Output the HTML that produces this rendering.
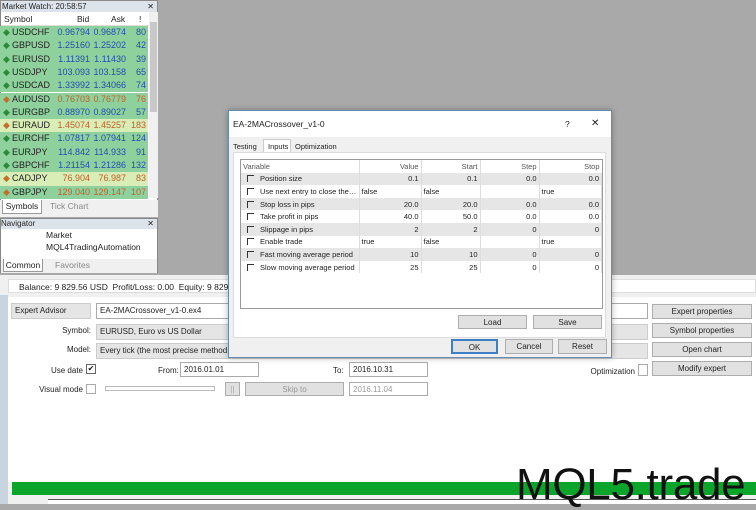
<!DOCTYPE html><html><head><style>
*{box-sizing:border-box;margin:0;padding:0}
body{width:756px;height:504px;overflow:hidden;background:#a9a9a9;font-family:"Liberation Sans",sans-serif;font-size:8px;color:#222;position:relative}
.a{position:absolute;white-space:nowrap}
.mw{left:0;top:0;width:158px;height:217px;background:#fff;border:1px solid #888}
.row{position:absolute;left:0;width:148px;height:13.3px;font-size:9px;line-height:13px}
.row span{position:absolute}
.g{background:#8fd19c}.y{background:#d9edb6}
.b{color:#1f4fb0}.o{color:#c0602a}
.btn{position:absolute;background:#e1e1e1;border:1px solid #adadad;text-align:center;font-size:8px;line-height:13px}
.inp{position:absolute;border:1px solid #aaa;background:#fff;font-size:8px;line-height:13px;padding-left:3px}
.cmb{position:absolute;background:#e5e5e5;border:1px solid #ccc;font-size:8px;line-height:14px;padding-left:3px}
.cb{display:inline-block;width:7px;height:7px;border-left:1px solid #333;border-top:1px solid #333;margin:0 6px 0 4px;vertical-align:-1px}
table{border-collapse:collapse;font-size:7.5px;table-layout:fixed}
td{height:12.6px;padding:0 2px;border-right:1px solid #ddd;white-space:nowrap;overflow:hidden;text-overflow:ellipsis}
</style></head><body>
<div class="a mw">
<div class="a" style="left:0;top:0;width:156px;height:11px;background:#dde3ea;font-size:8px;line-height:11px;padding-left:1px">Market Watch: 20:58:57<span style="position:absolute;right:3px">✕</span></div>
<div class="a" style="top:11px;left:0;width:148px;height:14px;font-size:8.5px;line-height:14px;background:#fff;border-bottom:1px solid #ddd"><span class="a" style="left:3px">Symbol</span><span class="a" style="left:76px">Bid</span><span class="a" style="left:110px">Ask</span><span class="a" style="left:138px">!</span></div>
<div class="a" style="left:148px;top:11px;width:9px;height:186px;background:#f0f0f0"><div style="margin:10px 1px;height:90px;background:#c8c8c8"></div></div>
</div>
<div id="rows"></div>
<div class="a" style="left:0;top:200px;width:158px;height:17px;background:#f0f0f0;font-size:8.5px"><div class="a" style="left:2px;top:0;width:40px;height:14px;background:#fff;border:1px solid #999;border-top:none;text-align:center;line-height:13px">Symbols</div><div class="a" style="left:50px;top:1px;color:#888">Tick Chart</div></div>
<div class="a" style="left:0;top:218px;width:158px;height:55px;background:#fff;border:1px solid #888">
<div style="height:10px;background:#dde3ea;font-size:8px;line-height:10px">Navigator<span style="float:right;margin-right:3px">✕</span></div>
<div style="font-size:8.5px;padding-left:45px;line-height:12px">Market<br>MQL4TradingAutomation</div>
<div class="a" style="left:0;top:40px;width:156px;height:14px;background:#f0f0f0"><div class="a" style="left:2px;top:0;width:40px;height:13px;background:#fff;border:1px solid #999;border-top:none;text-align:center;font-size:8.5px;line-height:12px">Common</div><div class="a" style="left:54px;top:1px;color:#888;font-size:8.5px">Favorites</div></div>
</div>
<div class="a" style="left:0;top:275px;width:756px;height:229px;background:#f0f0f0"></div>
<div class="a" style="left:8px;top:279px;width:748px;height:14px;background:#fff;font-size:8.5px;line-height:14px;padding-left:10px;border:1px solid #ddd">Balance: 9 829.56 USD &nbsp;Profit/Loss: 0.00 &nbsp;Equity: 9 829.56 &nbsp;Fre</div>
<div class="a" style="left:0;top:295px;width:8px;height:209px;background:#c8d4e0"></div>
<div class="a" style="left:8px;top:297px;width:748px;height:185px;background:#fff"></div>
<div class="cmb" style="left:11px;top:303px;width:80px;height:16px">Expert Advisor</div>
<div class="inp" style="left:96px;top:303px;width:552px;height:16px;line-height:14px">EA-2MACrossover_v1-0.ex4</div>
<div class="a" style="left:50px;top:326px;width:41px;text-align:right;font-size:8px">Symbol:</div>
<div class="cmb" style="left:96px;top:324px;width:552px;height:16px">EURUSD, Euro vs US Dollar</div>
<div class="a" style="left:50px;top:345px;width:41px;text-align:right;font-size:8px">Model:</div>
<div class="cmb" style="left:96px;top:343px;width:552px;height:16px">Every tick (the most precise method base</div>
<div class="btn" style="left:652px;top:304px;width:100px;height:15px">Expert properties</div>
<div class="btn" style="left:652px;top:323px;width:100px;height:15px">Symbol properties</div>
<div class="btn" style="left:652px;top:342px;width:100px;height:15px">Open chart</div>
<div class="btn" style="left:652px;top:361px;width:100px;height:15px">Modify expert</div>
<div class="a" style="left:30px;top:366px;width:53px;text-align:right;font-size:8px">Use date</div>
<div class="a" style="left:86px;top:364px;width:10px;height:10px;border:1px solid #666;background:#fff;font-size:8px;line-height:8px;text-align:center">✔</div>
<div class="a" style="left:158px;top:366px">From:</div>
<div class="inp" style="left:180px;top:362px;width:79px;height:15px">2016.01.01</div>
<div class="a" style="left:333px;top:366px">To:</div>
<div class="inp" style="left:349px;top:362px;width:79px;height:15px">2016.10.31</div>
<div class="a" style="left:20px;top:385px;width:63px;text-align:right">Visual mode</div>
<div class="a" style="left:86px;top:384px;width:10px;height:10px;border:1px solid #aaa;background:#fff"></div>
<div class="a" style="left:105px;top:386px;width:110px;height:5px;border:1px solid #bbb"></div>
<div class="btn" style="left:225px;top:382px;width:15px;height:14px;color:#aaa">||</div>
<div class="btn" style="left:245px;top:382px;width:99px;height:14px;color:#999">Skip to</div>
<div class="inp" style="left:349px;top:382px;width:79px;height:14px;color:#999">2016.11.04</div>
<div class="a" style="left:580px;top:367px;width:55px;text-align:right">Optimization</div>
<div class="a" style="left:638px;top:364px;width:10px;height:12px;border:1px solid #aaa;background:#fff"></div>
<div class="a" style="left:12px;top:482px;width:744px;height:13px;background:#0aa52a"></div>
<div class="a" style="left:48px;top:499px;width:708px;height:5px;border-top:1px solid #555;background:#fff"></div>
<div class="a" style="left:516px;top:460px;font-size:44px;color:#111;letter-spacing:-0.3px">MQL5.trade</div>
<div class="a" style="left:228px;top:110px;width:384px;height:248px;background:#f0f0f0;border:1px solid #6a8bb0;box-shadow:0 0 6px rgba(0,0,0,.3)">
<div class="a" style="left:0;top:0;width:382px;height:26px;background:#fff;font-size:8.5px;line-height:26px;padding-left:4px">EA-2MACrossover_v1-0<span class="a" style="left:336px">?</span><span class="a" style="left:362px;font-size:10px">✕</span></div>
<div class="a" style="left:4px;top:31px;font-size:7.5px">Testing</div>
<div class="a" style="left:34px;top:28px;width:28px;height:14px;background:#fff;border:1px solid #ccc;border-bottom:none;font-size:7.5px;padding:2px 0 0 4px">Inputs</div>
<div class="a" style="left:66px;top:31px;font-size:7.5px">Optimization</div>
<div class="a" style="left:4px;top:41px;width:373px;height:186px;background:#fff;border:1px solid #ddd"></div>
<div class="a" style="left:11px;top:48px;width:363px;height:150px;background:#fff;border:1px solid #999">
<table style="width:361px">
<colgroup><col style="width:118px"><col style="width:62px"><col style="width:59px"><col style="width:59px"><col></colgroup>
<tr style="color:#555"><td>Variable</td><td style="text-align:right">Value</td><td style="text-align:right">Start</td><td style="text-align:right">Step</td><td style="text-align:right;border:none">Stop</td></tr>
<tr style="background:#e6e6e6"><td><i class="cb"></i>Position size</td><td align=right>0.1</td><td align=right>0.1</td><td align=right>0.0</td><td align=right>0.0</td></tr>
<tr><td><i class="cb"></i>Use next entry to close the tra...</td><td>false</td><td>false</td><td></td><td>true</td></tr>
<tr style="background:#e6e6e6"><td><i class="cb"></i>Stop loss in pips</td><td align=right>20.0</td><td align=right>20.0</td><td align=right>0.0</td><td align=right>0.0</td></tr>
<tr><td><i class="cb"></i>Take profit in pips</td><td align=right>40.0</td><td align=right>50.0</td><td align=right>0.0</td><td align=right>0.0</td></tr>
<tr style="background:#e6e6e6"><td><i class="cb"></i>Slippage in pips</td><td align=right>2</td><td align=right>2</td><td align=right>0</td><td align=right>0</td></tr>
<tr><td><i class="cb"></i>Enable trade</td><td>true</td><td>false</td><td></td><td>true</td></tr>
<tr style="background:#e6e6e6"><td><i class="cb"></i>Fast moving average period</td><td align=right>10</td><td align=right>10</td><td align=right>0</td><td align=right>0</td></tr>
<tr><td><i class="cb"></i>Slow moving average period</td><td align=right>25</td><td align=right>25</td><td align=right>0</td><td align=right>0</td></tr>
</table></div>
<div class="btn" style="left:229px;top:204px;width:69px;height:14px">Load</div>
<div class="btn" style="left:304px;top:204px;width:69px;height:14px">Save</div>
<div class="btn" style="left:222px;top:228px;width:47px;height:15px;border:2px solid #3c7fc4">OK</div>
<div class="btn" style="left:276px;top:228px;width:48px;height:15px">Cancel</div>
<div class="btn" style="left:329px;top:228px;width:49px;height:15px">Reset</div>
</div>
<script>
var d=[["USDCHF","0.96794","0.96874","80",0],["GBPUSD","1.25160","1.25202","42",0],["EURUSD","1.11391","1.11430","39",0],["USDJPY","103.093","103.158","65",0],["USDCAD","1.33992","1.34066","74",0],["AUDUSD","0.76703","0.76779","76",1],["EURGBP","0.88970","0.89027","57",0],["EURAUD","1.45074","1.45257","183",2],["EURCHF","1.07817","1.07941","124",0],["EURJPY","114.842","114.933","91",0],["GBPCHF","1.21154","1.21286","132",0],["CADJPY","76.904","76.987","83",2],["GBPJPY","129.040","129.147","107",1]];
var h="";d.forEach(function(r,i){var bg=r[4]==2?"y":"g",c=r[4]?"o":"b";h+='<div class="row '+bg+'" style="top:'+(26+i*13.3)+'px"><span style="left:3px;color:'+(r[4]?'#c0702a':'#2a8a3a')+'">◆</span><span style="left:12px">'+r[0]+'</span><span class="'+c+'" style="right:58px">'+r[1]+'</span><span class="'+c+'" style="right:22px">'+r[2]+'</span><span class="'+c+'" style="right:2px">'+r[3]+'</span></div>'});
document.getElementById("rows").innerHTML=h;
</script>
</body></html>
